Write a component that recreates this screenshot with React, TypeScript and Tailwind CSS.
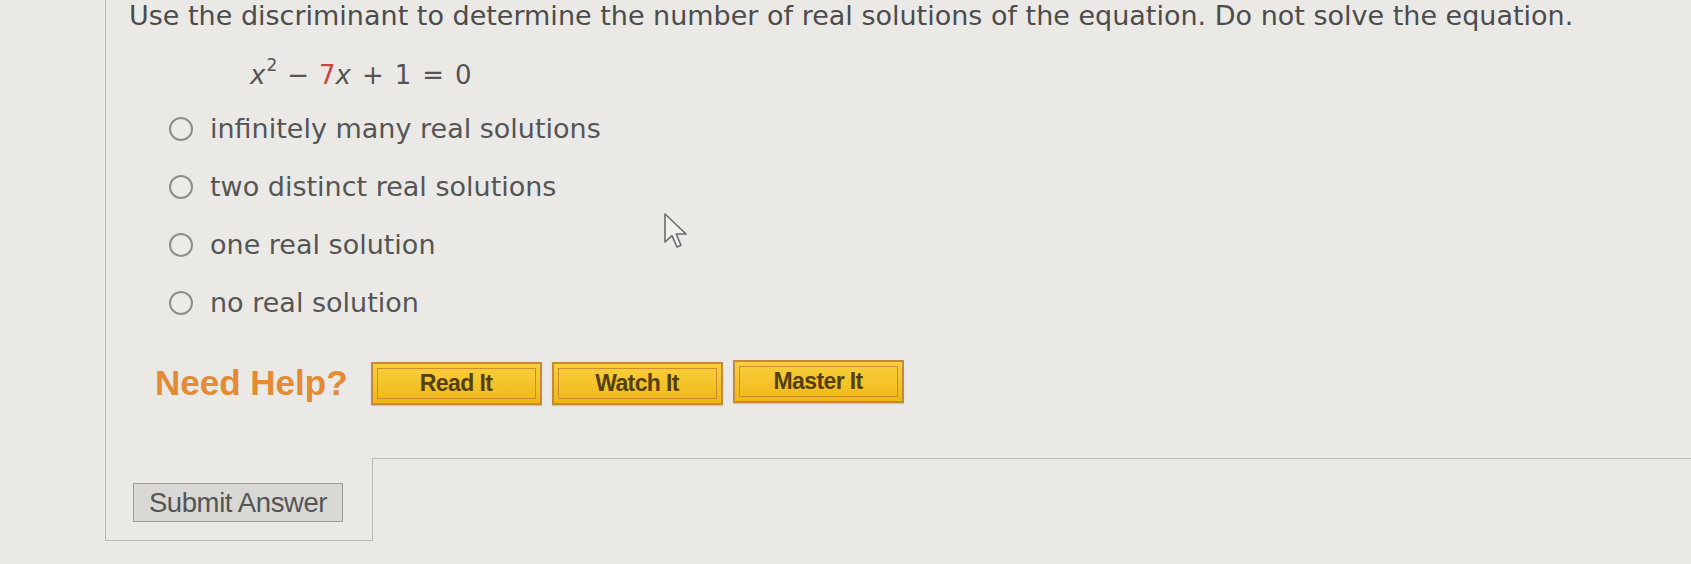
import React from "react";

const options = [
  "infinitely many real solutions",
  "two distinct real solutions",
  "one real solution",
  "no real solution",
];

function HelpButton({ label }: { label: string }) {
  return (
    <div className="flex h-[43px] w-[171px] border-2 border-[#c4893f] bg-gradient-to-b from-[#f9cf3c] to-[#efb712] p-[4px] shadow-[0_1px_1px_rgba(0,0,0,0.15)]">
      <div className="flex flex-1 items-center justify-center border border-[#cf8e2c] text-[23px] font-bold tracking-[-0.6px] text-[#54400f] [font-family:'Liberation_Sans',Arial,sans-serif]">
        {label}
      </div>
    </div>
  );
}

export default function App() {
  return (
    <div className="relative h-[564px] w-[1691px] overflow-hidden bg-[#eae9e6] [font-family:'DejaVu_Sans',Verdana,sans-serif]">
      <div className="ml-[105px] flex flex-col">
        {/* question area */}
        <div className="border-l border-[#b9b9b7] pl-[23px]">
          <div className="h-[30px] whitespace-nowrap pt-[2px] text-[27px] leading-[28px] text-[#4c4c4c]">
            Use the discriminant to determine the number of real solutions of the equation. Do not solve the equation.
          </div>
          <div className="mt-[25px] flex h-[40px] items-center pl-[121px] text-[26px] text-[#545454]">
            <span className="italic">x</span>
            <span className="relative -top-[9px] ml-[1px] text-[17px]">2</span>
            <span className="ml-[10px]">−</span>
            <span className="ml-[10px] text-[#c8463f]">7</span>
            <span className="italic">x</span>
            <span className="ml-[11px]">+</span>
            <span className="ml-[11px]">1</span>
            <span className="ml-[11px]">=</span>
            <span className="ml-[11px]">0</span>
          </div>
          <div className="mt-[5px] flex flex-col">
            {options.map((o) => (
              <div key={o} className="flex h-[58px] items-center pl-[40px]">
                <span className="h-[24px] w-[24px] rounded-full border-2 border-[#8d8d8b] bg-[#ecebe8]" />
                <span className="ml-[17px] whitespace-nowrap text-[27px] text-[#555555]">{o}</span>
              </div>
            ))}
          </div>
          <div className="mt-[29px] flex h-[44px] items-center pl-[26px]">
            <span className="text-[35px] font-bold text-[#e38b33] [font-family:'Liberation_Sans',Arial,sans-serif]">
              Need Help?
            </span>
            <div className="ml-[23px] flex items-center gap-[10px]">
              <HelpButton label="Read It" />
              <HelpButton label="Watch It" />
              <div className="-mt-[3px]">
                <HelpButton label="Master It" />
              </div>
            </div>
          </div>
          <div className="h-[53px]" />
        </div>
        {/* bottom area */}
        <div className="flex">
          <div className="flex h-[83px] w-[268px] border-x border-b border-[#b9b9b7] pl-[27px] pt-[25px]">
            <div className="flex h-[39px] w-[210px] items-center justify-center border border-[#9c9c9a] bg-[#d9d8d5] text-[27.5px] tracking-[-0.4px] text-[#555555] [font-family:'Liberation_Sans',Arial,sans-serif]">
              Submit Answer
            </div>
          </div>
          <div className="flex-1 border-t border-[#b9b9b7]" />
        </div>
      </div>
      {/* mouse cursor */}
      <svg
        className="absolute left-[663px] top-[212px]"
        width="26"
        height="38"
        viewBox="0 0 13 19"
      >
        <path
          d="M1 1 L1 15 L4.5 11.8 L7 17.5 L9 16.6 L6.6 11 L11.5 11 Z"
          fill="#f2f1ee"
          stroke="#6b6b6b"
          strokeWidth="0.8"
          strokeLinejoin="round"
        />
      </svg>
    </div>
  );
}
